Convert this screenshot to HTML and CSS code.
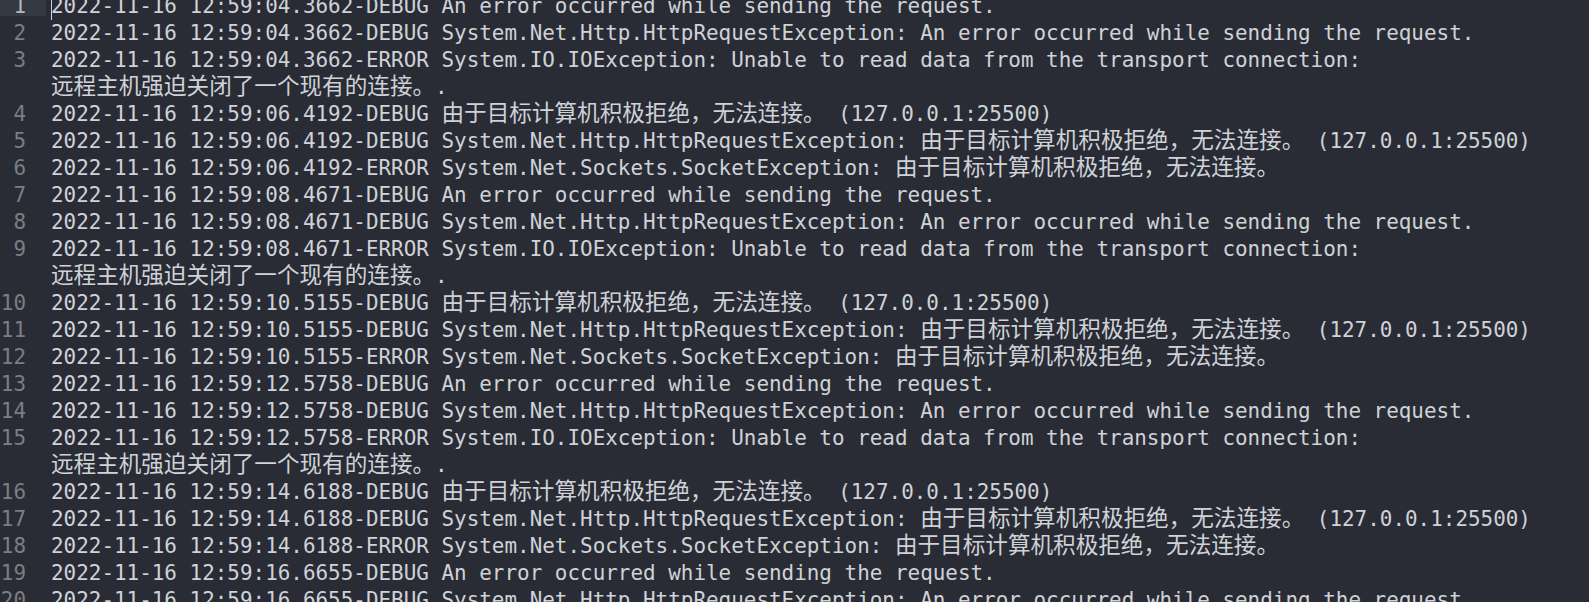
FILE: index.html
```html
<!DOCTYPE html>
<html lang="zh">
<head>
<meta charset="utf-8">
<title>log</title>
<link rel="stylesheet" href="styles.css">
</head>
<body>
<main class="editor">
  <div class="line active"><span class="ln">1</span><span class="code"><span class="caret"></span>2022-11-16 12:59:04.3662-DEBUG An error occurred while sending the request.</span></div>
  <div class="line"><span class="ln">2</span><span class="code">2022-11-16 12:59:04.3662-DEBUG System.Net.Http.HttpRequestException: An error occurred while sending the request.</span></div>
  <div class="line"><span class="ln">3</span><span class="code">2022-11-16 12:59:04.3662-ERROR System.IO.IOException: Unable to read data from the transport connection: <br><span class="zh">远程主机强迫关闭了一个现有的连接。</span>.</span></div>
  <div class="line"><span class="ln">4</span><span class="code">2022-11-16 12:59:06.4192-DEBUG <span class="zh">由于目标计算机积极拒绝，无法连接。</span> (127.0.0.1:25500)</span></div>
  <div class="line"><span class="ln">5</span><span class="code">2022-11-16 12:59:06.4192-DEBUG System.Net.Http.HttpRequestException: <span class="zh">由于目标计算机积极拒绝，无法连接。</span> (127.0.0.1:25500)</span></div>
  <div class="line"><span class="ln">6</span><span class="code">2022-11-16 12:59:06.4192-ERROR System.Net.Sockets.SocketException: <span class="zh">由于目标计算机积极拒绝，无法连接。</span></span></div>
  <div class="line"><span class="ln">7</span><span class="code">2022-11-16 12:59:08.4671-DEBUG An error occurred while sending the request.</span></div>
  <div class="line"><span class="ln">8</span><span class="code">2022-11-16 12:59:08.4671-DEBUG System.Net.Http.HttpRequestException: An error occurred while sending the request.</span></div>
  <div class="line"><span class="ln">9</span><span class="code">2022-11-16 12:59:08.4671-ERROR System.IO.IOException: Unable to read data from the transport connection: <br><span class="zh">远程主机强迫关闭了一个现有的连接。</span>.</span></div>
  <div class="line"><span class="ln">10</span><span class="code">2022-11-16 12:59:10.5155-DEBUG <span class="zh">由于目标计算机积极拒绝，无法连接。</span> (127.0.0.1:25500)</span></div>
  <div class="line"><span class="ln">11</span><span class="code">2022-11-16 12:59:10.5155-DEBUG System.Net.Http.HttpRequestException: <span class="zh">由于目标计算机积极拒绝，无法连接。</span> (127.0.0.1:25500)</span></div>
  <div class="line"><span class="ln">12</span><span class="code">2022-11-16 12:59:10.5155-ERROR System.Net.Sockets.SocketException: <span class="zh">由于目标计算机积极拒绝，无法连接。</span></span></div>
  <div class="line"><span class="ln">13</span><span class="code">2022-11-16 12:59:12.5758-DEBUG An error occurred while sending the request.</span></div>
  <div class="line"><span class="ln">14</span><span class="code">2022-11-16 12:59:12.5758-DEBUG System.Net.Http.HttpRequestException: An error occurred while sending the request.</span></div>
  <div class="line"><span class="ln">15</span><span class="code">2022-11-16 12:59:12.5758-ERROR System.IO.IOException: Unable to read data from the transport connection: <br><span class="zh">远程主机强迫关闭了一个现有的连接。</span>.</span></div>
  <div class="line"><span class="ln">16</span><span class="code">2022-11-16 12:59:14.6188-DEBUG <span class="zh">由于目标计算机积极拒绝，无法连接。</span> (127.0.0.1:25500)</span></div>
  <div class="line"><span class="ln">17</span><span class="code">2022-11-16 12:59:14.6188-DEBUG System.Net.Http.HttpRequestException: <span class="zh">由于目标计算机积极拒绝，无法连接。</span> (127.0.0.1:25500)</span></div>
  <div class="line"><span class="ln">18</span><span class="code">2022-11-16 12:59:14.6188-ERROR System.Net.Sockets.SocketException: <span class="zh">由于目标计算机积极拒绝，无法连接。</span></span></div>
  <div class="line"><span class="ln">19</span><span class="code">2022-11-16 12:59:16.6655-DEBUG An error occurred while sending the request.</span></div>
  <div class="line"><span class="ln">20</span><span class="code">2022-11-16 12:59:16.6655-DEBUG System.Net.Http.HttpRequestException: An error occurred while sending the request.</span></div>
</main>
</body>
</html>
```

FILE: styles.css
```css
html, body {
  margin: 0;
  padding: 0;
  height: 100%;
  overflow: hidden;
  background: #292c35;
}

.editor {
  margin-top: -7px;
  font-family: "DejaVu Sans Mono", "Noto Sans CJK SC", monospace;
  font-size: 20.93px;
  line-height: 27px;
  color: #cfd2d7;
}

.line {
  display: grid;
  grid-template-columns: 46px 1fr;
  column-gap: 5px;
}

.ln {
  text-align: right;
  padding-right: 20px;
  color: #7b7e85;
}

.line.active .ln {
  color: #b4b7bd;
  background: linear-gradient(#353944 23px, transparent 23px);
}

.code {
  position: relative;
  white-space: pre;
}

.zh {
  font-family: "Noto Sans CJK SC", sans-serif;
  font-size: 22.6px;
  line-height: 20px;
}

.caret {
  position: absolute;
  left: 0;
  top: 0;
  width: 1px;
  height: 27px;
  background: #cfd2d7;
}
```
